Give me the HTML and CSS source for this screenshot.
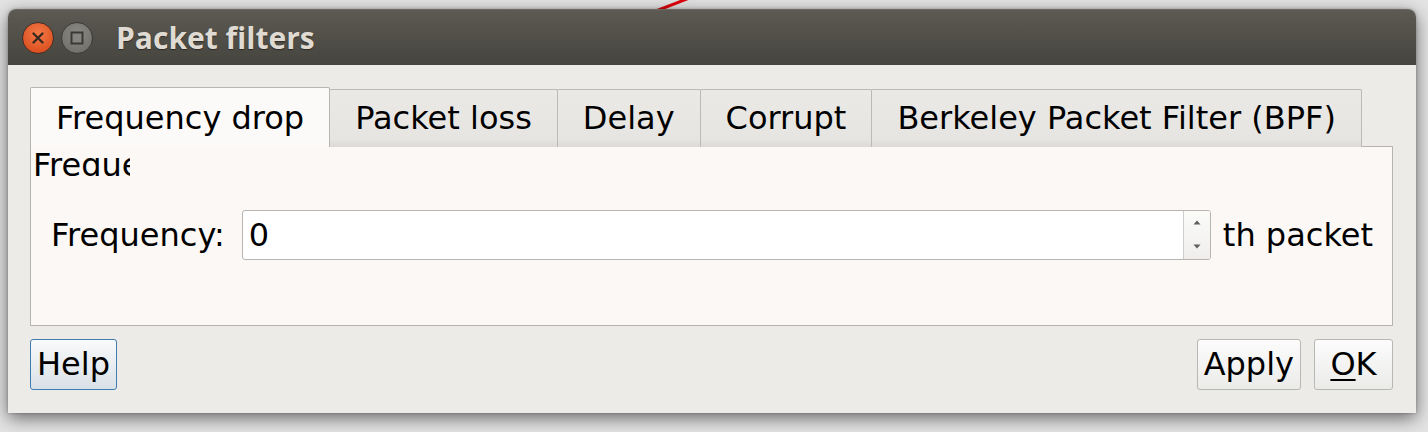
FILE: index.html
```html
<!DOCTYPE html>
<html>
<head>
<meta charset="utf-8">
<link rel="stylesheet" href="styles.css">
</head>
<body>
<svg class="bg-line" width="60" height="14" viewBox="0 0 60 14"><line x1="4" y1="13" x2="40" y2="-1" stroke="#e0000b" stroke-width="3"/></svg>
<div class="window">
  <div class="titlebar">
    <div class="wbtn close">
      <svg width="14" height="14" viewBox="0 0 14 14"><path d="M2.5 2.5 L11.5 11.5 M11.5 2.5 L2.5 11.5" stroke="#3a2920" stroke-width="2.4" stroke-linecap="round"/></svg>
    </div>
    <div class="wbtn maxi">
      <svg width="16" height="16" viewBox="0 0 16 16"><rect x="2.5" y="2.5" width="11" height="11" fill="#858480" stroke="#3a3935" stroke-width="2"/></svg>
    </div>
    <div class="title">Packet filters</div>
  </div>
  <div class="content">
    <div class="tabs">
      <div class="tab active">Frequency drop</div>
      <div class="tab">Packet loss</div>
      <div class="tab">Delay</div>
      <div class="tab">Corrupt</div>
      <div class="tab">Berkeley Packet Filter (BPF)</div>
    </div>
    <div class="pane">
      <div class="group-title">Frequency drop</div>
      <div class="form-row">
        <span class="label">Frequency:</span>
        <div class="spinbox">
          <div class="spin-value">0</div>
          <div class="spin-arrows">
            <svg width="8" height="5" viewBox="0 0 8 5"><path d="M0.5 4.5 L4 0.5 L7.5 4.5 Z" fill="#5e5e5e"/></svg>
            <svg width="8" height="5" viewBox="0 0 8 5"><path d="M0.5 0.5 L4 4.5 L7.5 0.5 Z" fill="#5e5e5e"/></svg>
          </div>
        </div>
        <span class="label suffix">th packet</span>
      </div>
    </div>
    <div class="buttons">
      <button class="btn default">Help</button>
      <div class="btn-group">
        <button class="btn">Apply</button>
        <button class="btn"><u>O</u>K</button>
      </div>
    </div>
  </div>
</div>
</body>
</html>
```

FILE: styles.css
```css
html, body {
  margin: 0;
  padding: 0;
}
body {
  width: 1428px;
  height: 432px;
  overflow: hidden;
  background: #e4e4e4;
  position: relative;
  font-family: "DejaVu Sans", sans-serif;
}
.bg-line {
  position: absolute;
  left: 652px;
  top: -2px;
}
.window {
  position: relative;
  margin: 9px 0 0 8px;
  width: 1408px;
  height: 404px;
  border-radius: 8px 8px 0 0;
  background: #edebe7;
  box-shadow: 0 5px 18px rgba(0,0,0,0.55), 0 0 3px rgba(0,0,0,0.25);
  display: flex;
  flex-direction: column;
}
.titlebar {
  height: 56px;
  border-radius: 8px 8px 0 0;
  background: linear-gradient(#5c5a52, #45443e);
  border-top: 1px solid #6a685f;
  box-sizing: border-box;
  display: flex;
  align-items: center;
  padding-left: 14px;
}
.wbtn {
  width: 32px;
  height: 32px;
  border-radius: 50%;
  box-sizing: border-box;
  display: flex;
  align-items: center;
  justify-content: center;
  margin-right: 6px;
}
.wbtn.close {
  background: radial-gradient(circle at 50% 35%, #f27a47, #df5424 70%, #cf4a1d);
  border: 1px solid #3e2f27;
  margin-right: 7px;
}
.wbtn.maxi {
  background: radial-gradient(circle at 50% 35%, #8a8984, #73726d 75%, #676661);
  border: 1px solid #3b3a36;
}
.title {
  margin-left: 17px;
  font-family: "Open Sans", sans-serif;
  font-weight: 700;
  font-size: 30px;
  color: #dfdbd2;
  text-shadow: 0 1px 1px #2c2b27;
}
.content {
  flex: 1;
  padding: 22px 23px 23px 22px;
  display: flex;
  flex-direction: column;
}
.tabs {
  display: flex;
  align-items: flex-end;
  height: 60px;
  font-size: 32px;
  line-height: 37px;
  color: #000;
}
.tab {
  position: relative;
  z-index: 1;
  height: 58px;
  box-sizing: border-box;
  padding: 10px 25px 0;
  margin-left: -1px;
  border: 1px solid #bcbab6;
  border-bottom: none;
  border-radius: 2px 2px 0 0;
  background: linear-gradient(#ebe9e6 0%, #e7e5e2 85%, #dcdad7 100%);
  white-space: nowrap;
}
.tab.active {
  margin-left: 0;
  height: 60px;
  padding-top: 12px;
  background: #fcfaf8;
  border-color: #b8b6b2;
  z-index: 2;
}
.pane {
  margin-top: -1px;
  height: 180px;
  box-sizing: border-box;
  border: 1px solid #b6b4b0;
  background: #fbf8f5;
  display: flex;
  flex-direction: column;
}
.group-title {
  width: 97px;
  height: 29px;
  margin-left: 2px;
  overflow: hidden;
  white-space: nowrap;
  font-size: 32px;
  line-height: 37px;
  color: #000;
}
.form-row {
  display: flex;
  align-items: center;
  margin-top: 34px;
  padding: 0 19px 0 20px;
  font-size: 32px;
}
.label {
  color: #000;
  white-space: nowrap;
}
.suffix {
  margin-left: 12px;
}
.spinbox {
  flex: 1;
  margin-left: 17px;
  height: 50px;
  box-sizing: border-box;
  border: 1px solid #b7b5b2;
  border-radius: 3px;
  background: #fff;
  display: flex;
}
.spin-value {
  flex: 1;
  padding-left: 6px;
  line-height: 48px;
  color: #000;
}
.spin-arrows {
  width: 27px;
  border-left: 1px solid #cfcdca;
  background: linear-gradient(#fbfbfa, #efeeec);
  border-radius: 0 2px 2px 0;
  display: flex;
  flex-direction: column;
  align-items: center;
  justify-content: space-between;
  padding: 9px 0 10px;
  box-sizing: border-box;
}
.buttons {
  margin-top: 13px;
  display: flex;
  justify-content: space-between;
}
.btn-group {
  display: flex;
  gap: 13px;
}
.btn {
  height: 51px;
  min-width: 79px;
  padding: 0 6px;
  box-sizing: border-box;
  border: 1px solid #b9b7b3;
  border-radius: 3px;
  background: linear-gradient(#fcfcfc, #ebebea);
  font-family: "DejaVu Sans", sans-serif;
  font-size: 32px;
  line-height: 49px;
  color: #000;
}
.btn u {
  text-decoration-thickness: 2px;
  text-underline-offset: 4px;
}
.btn.default {
  border-color: #3d7db2;
  background: linear-gradient(#f9fafb, #d9e1e7);
}
```
